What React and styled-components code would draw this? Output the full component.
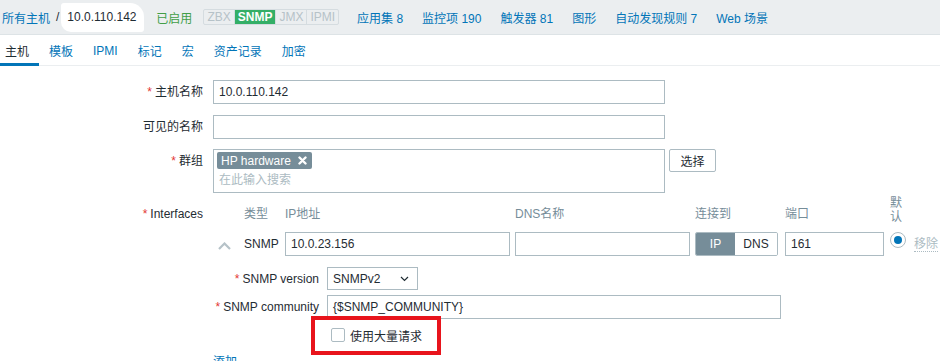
import React from "react";
import styled, { createGlobalStyle } from "styled-components";

const Global = createGlobalStyle`
  html, body { margin: 0; padding: 0; background: #fff; }
  body {
    font-family: "Liberation Sans", Arial, "Noto Sans CJK SC", sans-serif;
    font-size: 12px;
    color: #1f2c33;
  }
  #root { width: 940px; height: 361px; overflow: hidden; }
`;

const TopBar = styled.div`
  display: flex;
  align-items: center;
  height: 34px;
  background: #ebeef0;
  border-bottom: 1px solid #dde3e6;
  padding-left: 2px;
  white-space: nowrap;
`;

const Link = styled.a`
  color: #0275b8;
  text-decoration: none;
  cursor: pointer;
`;

const Sep = styled.span`
  margin: 0 0 0 6px;
  color: #1f2c33;
`;

const Masked = styled.span`
  display: inline-flex;
  flex: 0 0 83px;
  align-items: center;
  height: 29px;
  margin-left: 2px;
  padding-left: 6px;
  box-sizing: border-box;
  overflow: hidden;
  background: #fff;
  border-radius: 3px 14px 3px 10px;
  color: #1f2c33;
`;

const Enabled = styled.span`
  color: #429e47;
  margin-left: 12px;
`;

const StatusBox = styled.div`
  display: flex;
  margin-left: 11px;
  border: 1px solid #d5dce0;
  border-radius: 2px;
`;

const Badge = styled.span`
  padding: 0 3px;
  line-height: 14px;
  font-size: 12px;
  color: ${(p) => (p.$on ? "#fff" : "#b6c2c8")};
  background: ${(p) => (p.$on ? "#34af67" : "transparent")};
  font-weight: ${(p) => (p.$on ? "bold" : "normal")};
  & + & { border-left: 1px solid #d5dce0; }
`;

const NavLinks = styled.div`
  display: flex;
  gap: 19px;
  margin-left: 18px;
`;

const Tabs = styled.div`
  display: flex;
  height: 30px;
  margin-left: -5px;
  border-bottom: 1px solid #ebeef0;
`;

const Tab = styled.div`
  display: flex;
  align-items: center;
  height: 31px;
  box-sizing: border-box;
  padding: 3px 10px 0;
  margin-bottom: -1px;
  color: ${(p) => (p.$active ? "#1f2c33" : "#0275b8")};
  border-bottom: 3px solid ${(p) => (p.$active ? "#0275b8" : "transparent")};
`;

const Form = styled.div`
  padding-top: 14px;
`;

const Row = styled.div`
  display: grid;
  grid-template-columns: 203px 1fr;
  column-gap: 10px;
  align-items: ${(p) => p.$align || "center"};
  margin-bottom: ${(p) => p.$mb || 0}px;
`;

const Label = styled.div`
  text-align: right;
  white-space: nowrap;
  line-height: 24px;
  margin-top: ${(p) => p.$mt || 0}px;
`;

const Req = styled.span`
  color: #e33734;
  margin-right: 3px;
`;

const Input = styled.div`
  width: ${(p) => p.$w}px;
  height: 24px;
  box-sizing: border-box;
  border: 1px solid #acbbc2;
  background: #fff;
  padding: 0 5px;
  line-height: 22px;
  white-space: nowrap;
  overflow: hidden;
`;

const Inline = styled.div`
  display: flex;
  align-items: flex-start;
  gap: 4px;
`;

const Multi = styled.div`
  width: 452px;
  height: 44px;
  box-sizing: border-box;
  border: 1px solid #acbbc2;
  padding: 2px 3px;
`;

const Tag = styled.span`
  display: inline-flex;
  align-items: center;
  gap: 7px;
  height: 17px;
  padding: 0 5px 0 4px;
  background: #768d99;
  color: #fff;
  border-radius: 2px;
`;

const Placeholder = styled.div`
  color: #acbbc2;
  line-height: 18px;
  padding-left: 2px;
  margin-top: 2px;
`;

const Button = styled.div`
  width: 47px;
  height: 23px;
  box-sizing: border-box;
  border: 1px solid #acbbc2;
  border-radius: 2px;
  background: #fff;
  display: flex;
  align-items: center;
  justify-content: center;
`;

const IfGrid = styled.div`
  display: grid;
  grid-template-columns: 31px 41px 230px 180px 90px 105px 24px auto;
`;

const Head = styled.div`
  color: #768d99;
  line-height: 14px;
  align-self: end;
  padding-bottom: 3px;
  white-space: nowrap;
`;

const HeadWrap = styled.div`
  color: #768d99;
  line-height: 14px;
  width: 13px;
  overflow-wrap: anywhere;
`;

const Cell = styled.div`
  display: flex;
  align-items: center;
  height: 24px;
  margin-top: 8px;
`;

const Toggle = styled.div`
  display: flex;
  width: 83px;
  height: 24px;
  box-sizing: border-box;
  border: 1px solid #acbbc2;
  border-radius: 2px;
  overflow: hidden;
`;

const ToggleOpt = styled.div`
  flex: ${(p) => (p.$on ? "0 0 39px" : "1")};
  display: flex;
  align-items: center;
  justify-content: center;
  background: ${(p) => (p.$on ? "#768d99" : "#fff")};
  color: ${(p) => (p.$on ? "#fff" : "#1f2c33")};
`;

const Radio = styled.div`
  width: 16px;
  height: 16px;
  box-sizing: border-box;
  border: 1px solid #acbbc2;
  border-radius: 50%;
  background: #fff;
  display: flex;
  align-items: center;
  justify-content: center;
  align-self: flex-start;
  &::after {
    content: "";
    width: 8px;
    height: 8px;
    border-radius: 50%;
    background: #0275b8;
  }
`;

const Remove = styled.span`
  color: #acbbc2;
  border-bottom: 1px dotted #acbbc2;
  line-height: 14px;
`;

const Sub = styled.div`
  display: grid;
  grid-template-columns: 106px 1fr;
  column-gap: 8px;
  align-items: center;
  margin-top: 11px;
`;

const SubLabel = styled.div`
  text-align: right;
  white-space: nowrap;
  margin-bottom: ${(p) => p.$mb || 0}px;
`;

const Select = styled.div`
  width: 91px;
  height: 23px;
  box-sizing: border-box;
  border: 1px solid #acbbc2;
  padding: 0 8px 0 5px;
  display: flex;
  align-items: center;
  justify-content: space-between;
  margin-bottom: 5px;
`;

const CheckRow = styled.div`
  position: relative;
  display: flex;
  align-items: center;
  gap: 5px;
  height: 16px;
  padding-left: 4px;
`;

const Check = styled.span`
  width: 14px;
  height: 14px;
  box-sizing: border-box;
  border: 1px solid #acbbc2;
  border-radius: 2px;
  background: #fff;
`;

const Highlight = styled.div`
  position: absolute;
  left: -16px;
  top: -11px;
  width: 130px;
  height: 39px;
  box-sizing: border-box;
  border: 4px solid #e8141c;
  pointer-events: none;
`;

const AddLink = styled(Link)`
  display: inline-block;
  margin-top: 12px;
  line-height: 14px;
  border-bottom: 1px dotted #0275b8;
`;

const navItems = ["应用集 8", "监控项 190", "触发器 81", "图形", "自动发现规则 7", "Web 场景"];
const tabs = ["主机", "模板", "IPMI", "标记", "宏", "资产记录", "加密"];

function ChevronUp() {
  return (
    <svg width="13" height="8" viewBox="0 0 13 8" style={{ marginLeft: 5, marginTop: 3 }}>
      <polyline points="1,7 6.5,1.5 12,7" fill="none" stroke="#b6c2c8" strokeWidth="2.2" />
    </svg>
  );
}

function ChevronDown() {
  return (
    <svg width="9" height="6" viewBox="0 0 9 6">
      <polyline points="1,1 4.5,4.5 8,1" fill="none" stroke="#1f2c33" strokeWidth="1.2" />
    </svg>
  );
}

function Cross() {
  return (
    <svg width="9" height="9" viewBox="0 0 9 9">
      <path d="M1.5 1.5 L7.5 7.5 M7.5 1.5 L1.5 7.5" stroke="#fff" strokeWidth="2.4" strokeLinecap="round" />
    </svg>
  );
}

export default function App() {
  return (
    <>
      <Global />
      <TopBar>
        <Link>所有主机</Link>
        <Sep>/</Sep>
        <Masked>10.0.110.142</Masked>
        <Enabled>已启用</Enabled>
        <StatusBox>
          <Badge>ZBX</Badge>
          <Badge $on>SNMP</Badge>
          <Badge>JMX</Badge>
          <Badge>IPMI</Badge>
        </StatusBox>
        <NavLinks>
          {navItems.map((n) => (
            <Link key={n}>{n}</Link>
          ))}
        </NavLinks>
      </TopBar>
      <Tabs>
        {tabs.map((t, i) => (
          <Tab key={t} $active={i === 0}>
            {t}
          </Tab>
        ))}
      </Tabs>
      <Form>
        <Row $mb={11}>
          <Label>
            <Req>*</Req>主机名称
          </Label>
          <Input $w={452}>10.0.110.142</Input>
        </Row>
        <Row $mb={10}>
          <Label>可见的名称</Label>
          <Input $w={452} />
        </Row>
        <Row $align="start" $mb={3}>
          <Label>
            <Req>*</Req>群组
          </Label>
          <Inline>
            <Multi>
              <Tag>
                HP hardware
                <Cross />
              </Tag>
              <Placeholder>在此输入搜索</Placeholder>
            </Multi>
            <Button>选择</Button>
          </Inline>
        </Row>
        <Row $align="start">
          <Label $mt={6}>
            <Req>*</Req>Interfaces
          </Label>
          <div>
            <IfGrid>
              <div />
              <Head>类型</Head>
              <Head>IP地址</Head>
              <Head>DNS名称</Head>
              <Head>连接到</Head>
              <Head>端口</Head>
              <HeadWrap>默认</HeadWrap>
              <div />

              <Cell>
                <ChevronUp />
              </Cell>
              <Cell>SNMP</Cell>
              <Cell>
                <Input $w={225}>10.0.23.156</Input>
              </Cell>
              <Cell>
                <Input $w={175} />
              </Cell>
              <Cell>
                <Toggle>
                  <ToggleOpt $on>IP</ToggleOpt>
                  <ToggleOpt>DNS</ToggleOpt>
                </Toggle>
              </Cell>
              <Cell>
                <Input $w={99}>161</Input>
              </Cell>
              <Cell>
                <Radio />
              </Cell>
              <Cell>
                <Remove>移除</Remove>
              </Cell>
            </IfGrid>
            <Sub>
              <SubLabel $mb={5}>
                <Req>*</Req>SNMP version
              </SubLabel>
              <Select>
                SNMPv2
                <ChevronDown />
              </Select>
              <SubLabel $mb={9}>
                <Req>*</Req>SNMP community
              </SubLabel>
              <Input $w={454} style={{ marginBottom: 8 }}>
                {"{$SNMP_COMMUNITY}"}
              </Input>
              <div />
              <CheckRow>
                <Check />
                使用大量请求
                <Highlight />
              </CheckRow>
            </Sub>
            <AddLink>添加</AddLink>
          </div>
        </Row>
      </Form>
    </>
  );
}
